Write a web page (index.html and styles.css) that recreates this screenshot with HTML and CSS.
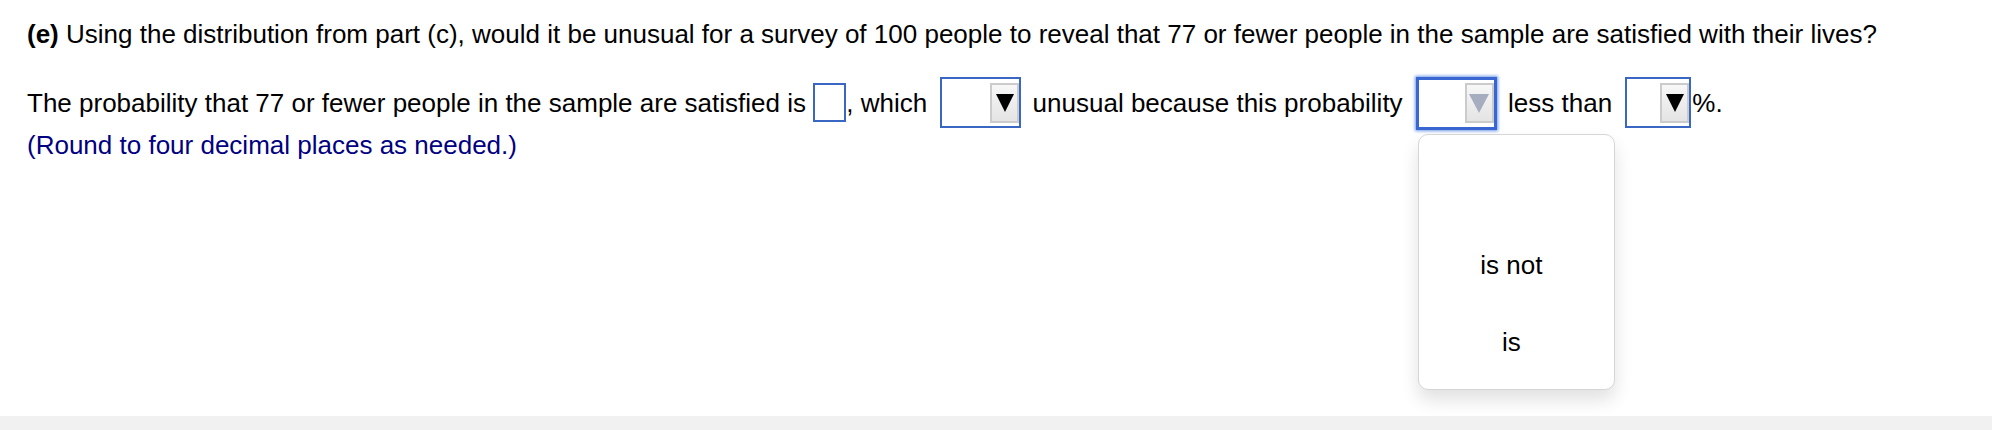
FILE: index.html
```html
<!DOCTYPE html>
<html lang="en">
<head>
    <meta charset="UTF-8">
    <title>Question (e)</title>
    <link rel="stylesheet" href="styles.css">
</head>
<body>
    <div class="question">
        <p class="prompt"><b>(e)</b> Using the distribution from part (c), would it be unusual for a survey of 100 people to reveal that 77 or fewer people in the sample are satisfied with their lives?</p>

        <p class="answer">The probability that 77 or fewer people in the sample are satisfied is <span class="box"></span>, which <span class="pick"><span class="arrow"></span></span> unusual because this probability <span class="pick focused"><span class="arrow"></span><span class="menu"><span class="option">is not</span><span class="option">is</span></span></span> less than <span class="pick small"><span class="arrow"></span></span>%.</p>

        <p class="hint">(Round to four decimal places as needed.)</p>
    </div>
    <div class="footer"></div>
</body>
</html>
```

FILE: styles.css
```css
html, body {
    height: 100%;
}

body {
    margin: 0;
    font-family: "Liberation Sans", Arial, sans-serif;
    font-size: 26px;
    color: #000;
    background: #fff;
    display: flex;
    flex-direction: column;
    overflow: hidden;
}

.question {
    flex: 1;
    padding: 19px 0 0 27px;
}

.question p {
    margin: 0;
    line-height: 30px;
}

.answer {
    margin-top: 28px !important;
}

.hint {
    color: #000080;
}

.box {
    display: inline-block;
    width: 29px;
    height: 35px;
    border: 2px solid #3b67c4;
    vertical-align: -10px;
}

.pick {
    display: inline-block;
    box-sizing: border-box;
    width: 81px;
    height: 51px;
    padding-top: 4px;
    margin: 0 4px 0 6px;
    border: 2px solid #3b67c4;
    vertical-align: -16px;
    position: relative;
    background: #fff;
}

.pick.small {
    width: 66px;
    margin-right: 1px;
}

.arrow {
    float: right;
    box-sizing: border-box;
    width: 29px;
    height: 40px;
    border: 2px solid #cbcbcb;
    background: linear-gradient(to bottom, #f7f7f7, #e4e4e4);
    display: flex;
    justify-content: center;
    align-items: center;
}

.arrow::before {
    content: '';
    width: 0;
    height: 0;
    border-left: 9px solid transparent;
    border-right: 9px solid transparent;
    border-top: 18px solid #000;
}

.focused {
    height: 53px;
    border: 3px solid #3a66d2;
    box-shadow: 0 0 3px 1px #7098e8;
    padding-top: 3px;
    vertical-align: -18px;
}

.focused .arrow::before {
    border-left-width: 10px;
    border-right-width: 10px;
    border-top: 19px solid #a6adbf;
}

.menu {
    position: absolute;
    top: calc(100% + 7px);
    left: -1px;
    width: 197px;
    height: 256px;
    box-sizing: border-box;
    border: 1px solid #d6d6d6;
    border-radius: 10px;
    background: #fff;
    box-shadow: 0 10px 18px rgba(0, 0, 0, 0.12);
    display: flex;
    flex-direction: column;
    align-items: center;
    padding-top: 115px;
    z-index: 2;
}

.option {
    display: block;
    line-height: 30px;
    margin-left: -10px;
}

.option + .option {
    margin-top: 47px;
}

.footer {
    height: 14px;
    background: #f1f1f1;
}
```
